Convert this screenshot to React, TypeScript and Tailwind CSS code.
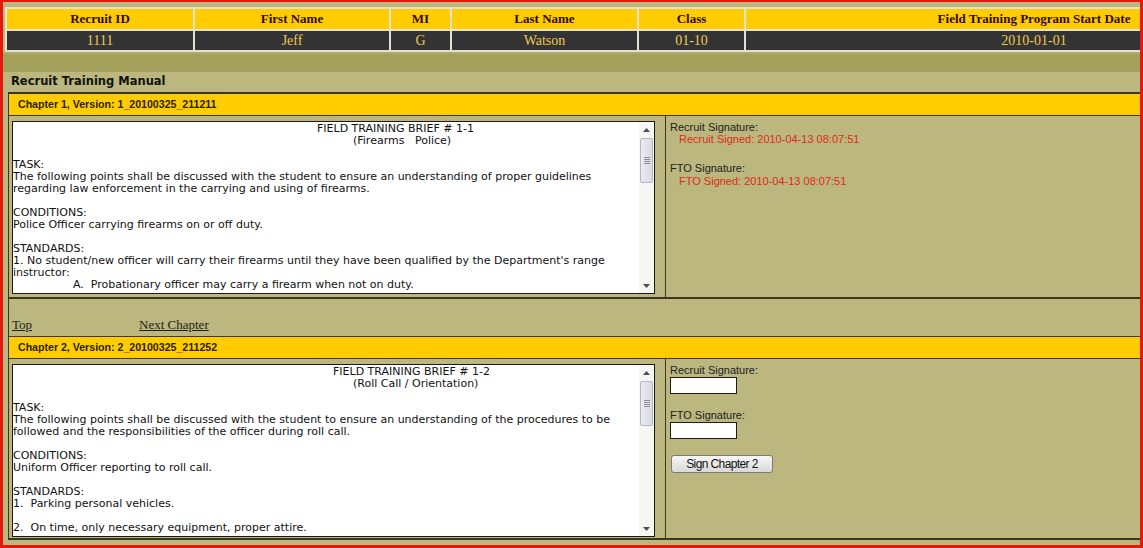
import React from "react";

type Line = { t: string; c?: string };

const chapterOne: Line[] = [
  { t: "FIELD TRAINING BRIEF # 1-1", c: "pl-[304px]" },
  { t: "(Firearms   Police)", c: "pl-[340px]" },
  { t: "" },
  { t: "TASK:" },
  { t: "The following points shall be discussed with the student to ensure an understanding of proper guidelines" },
  { t: "regarding law enforcement in the carrying and using of firearms." },
  { t: "" },
  { t: "CONDITIONS:" },
  { t: "Police Officer carrying firearms on or off duty." },
  { t: "" },
  { t: "STANDARDS:" },
  { t: "1. No student/new officer will carry their firearms until they have been qualified by the Department's range" },
  { t: "instructor:" },
  { t: "A.  Probationary officer may carry a firearm when not on duty.", c: "pl-[60px]" },
];

const chapterTwo: Line[] = [
  { t: "FIELD TRAINING BRIEF # 1-2", c: "pl-[320px]" },
  { t: "(Roll Call / Orientation)", c: "pl-[340px]" },
  { t: "" },
  { t: "TASK:" },
  { t: "The following points shall be discussed with the student to ensure an understanding of the procedures to be" },
  { t: "followed and the responsibilities of the officer during roll call." },
  { t: "" },
  { t: "CONDITIONS:" },
  { t: "Uniform Officer reporting to roll call." },
  { t: "" },
  { t: "STANDARDS:" },
  { t: "1.  Parking personal vehicles." },
  { t: "" },
  { t: "2.  On time, only necessary equipment, proper attire." },
];

const headers = [
  { label: "Recruit ID", value: "1111" },
  { label: "First Name", value: "Jeff" },
  { label: "MI", value: "G" },
  { label: "Last Name", value: "Watson" },
  { label: "Class", value: "01-10" },
  { label: "Field Training Program Start Date", value: "2010-01-01" },
];

function Scrollbar() {
  return (
    <div className="flex w-[15px] shrink-0 flex-col bg-[#f6f6f3]">
      <div className="flex h-[15px] items-center justify-center">
        <svg width="7" height="4" viewBox="0 0 7 4">
          <path d="M0 4 L3.5 0 L7 4 Z" fill="#4d4d4d" />
        </svg>
      </div>
      <div className="mx-[1px] mt-[1px] flex h-[45px] flex-col items-center justify-center gap-[1px] rounded-[2px] border border-[#b4b7bf] bg-gradient-to-r from-[#e9ebef] to-[#d9dce3]">
        <div className="h-px w-[6px] bg-[#8a8d96]" />
        <div className="h-px w-[6px] bg-[#8a8d96]" />
        <div className="h-px w-[6px] bg-[#8a8d96]" />
        <div className="h-px w-[6px] bg-[#8a8d96]" />
      </div>
      <div className="flex-1" />
      <div className="flex h-[15px] items-center justify-center">
        <svg width="7" height="4" viewBox="0 0 7 4">
          <path d="M0 0 L3.5 4 L7 0 Z" fill="#4d4d4d" />
        </svg>
      </div>
    </div>
  );
}

function Brief({ lines }: { lines: Line[] }) {
  return (
    <div className="ml-[3px] mt-[5px] flex h-[173px] w-[643px] border border-[#1a1a1a] bg-white">
      <div className="flex-1 overflow-hidden pt-[1px] font-['DejaVu_Sans',Verdana,sans-serif] text-[11px] leading-[12px] text-[#111]">
        {lines.map((l, i) => (
          <div key={i} className={`h-[12px] whitespace-pre ${l.c ?? ""}`}>
            {l.t}
          </div>
        ))}
      </div>
      <Scrollbar />
    </div>
  );
}

function ChapterHeader({ text }: { text: string }) {
  return (
    <div className="flex h-[21px] items-center bg-[#ffcc00] pl-[9px] font-['Liberation_Sans',Arial,sans-serif] text-[10.6px] font-bold text-[#2a1f00]">
      {text}
    </div>
  );
}

export default function App() {
  return (
    <div className="h-[548px] w-[1143px] overflow-hidden border-[3px] border-t-2 border-[#e4190c] bg-[#bbb77e]">
      {/* recruit summary */}
      <div className="ml-[2px] mt-[5px] grid w-max grid-cols-[186px_194px_59px_185px_105px_576px] gap-[2px] bg-[#e3e2d2] p-[2px] font-['Liberation_Serif','Times_New_Roman',serif]">
        {headers.map((h) => (
          <div
            key={h.label}
            className="flex h-[20px] items-center justify-center bg-[#ffcc00] text-[13px] font-bold text-[#330a00]"
          >
            {h.label}
          </div>
        ))}
        {headers.map((h) => (
          <div
            key={h.value}
            className="flex h-[19px] items-center justify-center bg-[#333333] text-[14px] text-[#efc755]"
          >
            {h.value}
          </div>
        ))}
      </div>
      <div className="h-[20px] border-t-2 border-[#aeab6a] bg-[#a4a15d]" />
      <div className="flex h-[20px] items-center pl-[8px] font-['DejaVu_Sans',Verdana,sans-serif] text-[11.5px] font-bold text-[#111]">
        Recruit Training Manual
      </div>

      {/* manual */}
      <div className="ml-[5px] border-l border-[#3c3820]">
        <div className="border-t-2 border-b border-[#3c3820]">
          <ChapterHeader text="Chapter 1, Version: 1_20100325_211211" />
        </div>
        <div className="flex h-[181px]">
          <div className="w-[657px] border-r border-[#3c3820]">
            <Brief lines={chapterOne} />
          </div>
          <div className="flex-1 pl-[4px] pt-[5px] font-['Liberation_Sans',Arial,sans-serif] text-[11px] leading-[12px] text-[#222]">
            <div>Recruit Signature:</div>
            <div className="pl-[9px] text-[#e02a1a]">Recruit Signed: 2010-04-13 08:07:51</div>
            <div className="mt-[17px]">FTO Signature:</div>
            <div className="mt-px pl-[9px] text-[#e02a1a]">FTO Signed: 2010-04-13 08:07:51</div>
          </div>
        </div>
        <div className="flex h-[39px] gap-[107px] border-t-2 border-[#3c3820] pl-[3px] pt-[18px] font-['Liberation_Serif','Times_New_Roman',serif] text-[13px] leading-[15px] text-[#222218]">
          <a href="#" className="underline">Top</a>
          <a href="#" className="underline">Next Chapter</a>
        </div>
        <div className="border-y border-[#3c3820]">
          <ChapterHeader text="Chapter 2, Version: 2_20100325_211252" />
        </div>
        <div className="flex h-[181px] border-b-2 border-[#3c3820]">
          <div className="w-[657px] border-r border-[#3c3820]">
            <Brief lines={chapterTwo} />
          </div>
          <div className="flex flex-1 flex-col items-start pl-[4px] pt-[5px] font-['Liberation_Sans',Arial,sans-serif] text-[11px] leading-[12px] text-[#222]">
            <div>Recruit Signature:</div>
            <input className="mt-px h-[17px] w-[67px] border border-[#1c1c1c] bg-white" />
            <div className="mt-[15px]">FTO Signature:</div>
            <input className="mt-px h-[17px] w-[67px] border border-[#1c1c1c] bg-white" />
            <button
              type="button"
              className="ml-px mt-[16px] h-[18px] w-[102px] rounded-[3px] border border-[#7a7a7a] bg-gradient-to-b from-[#f7f7f7] to-[#d9d9d9] text-[12px] leading-[16px] tracking-[-0.6px] text-[#111]"
            >
              Sign Chapter 2
            </button>
          </div>
        </div>
      </div>
    </div>
  );
}
